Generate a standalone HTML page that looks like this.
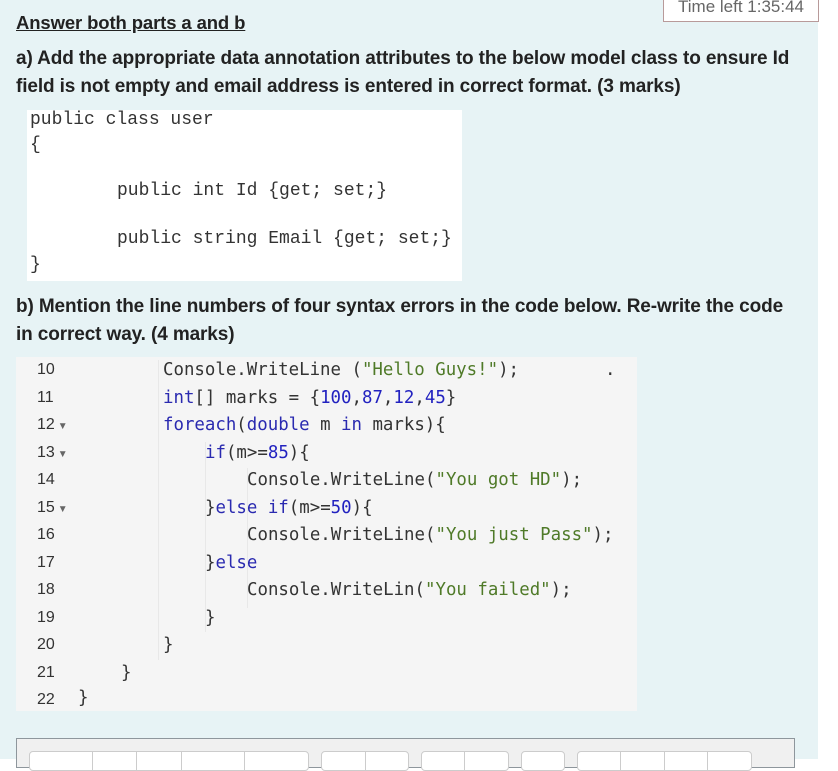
<!DOCTYPE html>
<html><head><meta charset="utf-8"><style>
*{margin:0;padding:0;box-sizing:border-box}
body{width:838px;height:759px;overflow:hidden;background:#fff;position:relative;font-family:"Liberation Sans",sans-serif}
#bg{position:absolute;left:0;top:0;width:818px;height:759px;background:#e7f3f5}
.t{position:absolute;left:16px;font-weight:bold;font-size:19px;color:#222;white-space:nowrap;letter-spacing:-0.12px}
#timer{position:absolute;left:663px;top:-4px;width:156px;height:26px;background:#fff;border:1px solid #b89a9a;color:#666;font-size:17px;text-align:center;line-height:20px}
#ca{position:absolute;left:27px;top:110px;width:435px;height:171px;background:#fff}
.m{position:absolute;font-family:"Liberation Mono",monospace;font-size:18px;color:#333;white-space:pre}
#cb{position:absolute;left:16px;top:357px;width:621px;height:354px;background:#f5f5f5}
.ln{position:absolute;left:37px;font-size:16px;color:#333;font-family:"Liberation Sans",sans-serif}
.ln i{font-style:normal;font-size:10px;color:#666;margin-left:3px}
.c{position:absolute;font-family:"DejaVu Sans Mono",monospace;font-size:17.4px;color:#333;white-space:pre}
.k{color:#2a2ab0}.s{color:#4f7a28}.n{color:#2222c0}
.g{position:absolute;width:1px;background:#e8e8e8}
#ed{position:absolute;left:16px;top:738px;width:779px;height:30px;background:#f0f0f0;border:1px solid #8e969c}
.grp{position:absolute;top:751px;height:20px;background:#fff;border:1px solid #ccc;border-radius:4px}
.dv{position:absolute;top:751px;width:1px;height:20px;background:#ccc}
</style></head><body>
<div id="bg"></div>
<div id="timer">Time left 1:35:44</div>
<div class="t" style="top:12px;font-size:18.5px;text-decoration:underline">Answer both parts a and b</div>
<div class="t" style="top:48px">a) Add the appropriate data annotation attributes to the below model class to ensure Id</div>
<div class="t" style="top:76px">field is not empty and email address is entered in correct format. (3 marks)</div>
<div id="ca"></div>
<div class="m" style="left:30px;top:110px">public class user</div>
<div class="m" style="left:30px;top:135px">{</div>
<div class="m" style="left:117px;top:181px">public int Id {get; set;}</div>
<div class="m" style="left:117px;top:229px">public string Email {get; set;}</div>
<div class="m" style="left:30px;top:255px">}</div>
<div class="t" style="top:296px">b) Mention the line numbers of four syntax errors in the code below. Re-write the code</div>
<div class="t" style="top:324px">in correct way. (4 marks)</div>
<div id="cb"></div>
<div class="g" style="left:158px;top:360px;height:300px"></div>
<div class="g" style="left:205px;top:442px;height:190px"></div>
<div class="g" style="left:247px;top:468px;height:140px"></div>
<div class="ln" style="top:361px">10</div>
<div class="ln" style="top:389px">11</div>
<div class="ln" style="top:416px">12<i>▼</i></div>
<div class="ln" style="top:444px">13<i>▼</i></div>
<div class="ln" style="top:471px">14</div>
<div class="ln" style="top:499px">15<i>▼</i></div>
<div class="ln" style="top:526px">16</div>
<div class="ln" style="top:554px">17</div>
<div class="ln" style="top:581px">18</div>
<div class="ln" style="top:609px">19</div>
<div class="ln" style="top:636px">20</div>
<div class="ln" style="top:664px">21</div>
<div class="ln" style="top:691px">22</div>
<div class="c" style="left:78px;top:688px">}</div>
<div class="c" style="left:163px;top:360px">Console.WriteLine (<span class="s">"Hello Guys!"</span>);</div>
<div class="c" style="left:605px;top:360px">.</div>
<div class="c" style="left:163px;top:388px"><span class="k">int</span>[] marks = {<span class="n">100</span>,<span class="n">87</span>,<span class="n">12</span>,<span class="n">45</span>}</div>
<div class="c" style="left:163px;top:415px"><span class="k">foreach</span>(<span class="k">double</span> m <span class="k">in</span> marks){</div>
<div class="c" style="left:205px;top:443px"><span class="k">if</span>(m&gt;=<span class="n">85</span>){</div>
<div class="c" style="left:247px;top:470px">Console.WriteLine(<span class="s">"You got HD"</span>);</div>
<div class="c" style="left:205px;top:498px">}<span class="k">else if</span>(m&gt;=<span class="n">50</span>){</div>
<div class="c" style="left:247px;top:525px">Console.WriteLine(<span class="s">"You just Pass"</span>);</div>
<div class="c" style="left:205px;top:553px">}<span class="k">else</span></div>
<div class="c" style="left:247px;top:580px">Console.WriteLin(<span class="s">"You failed"</span>);</div>
<div class="c" style="left:205px;top:608px">}</div>
<div class="c" style="left:163px;top:635px">}</div>
<div class="c" style="left:121px;top:663px">}</div>
<div id="ed"></div>
<div class="grp" style="left:29px;width:280px"></div>
<div class="dv" style="left:92px"></div><div class="dv" style="left:136px"></div><div class="dv" style="left:181px"></div><div class="dv" style="left:244px"></div>
<div class="grp" style="left:321px;width:88px"></div><div class="dv" style="left:365px"></div>
<div class="grp" style="left:421px;width:88px"></div><div class="dv" style="left:464px"></div>
<div class="grp" style="left:521px;width:44px"></div>
<div class="grp" style="left:577px;width:175px"></div>
<div class="dv" style="left:620px"></div><div class="dv" style="left:664px"></div><div class="dv" style="left:707px"></div>
</body></html>
